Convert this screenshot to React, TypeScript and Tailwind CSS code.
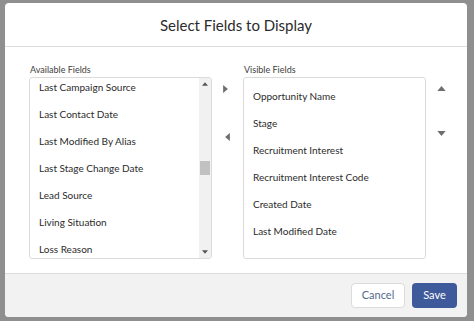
const available = [
  "Last Campaign Source",
  "Last Contact Date",
  "Last Modified By Alias",
  "Last Stage Change Date",
  "Lead Source",
  "Living Situation",
  "Loss Reason",
];

const visible = [
  "Opportunity Name",
  "Stage",
  "Recruitment Interest",
  "Recruitment Interest Code",
  "Created Date",
  "Last Modified Date",
];

const Tri = ({ dir, className }: { dir: "up" | "down" | "left" | "right"; className?: string }) => {
  const pts = {
    up: "0,6 5,0 10,6",
    down: "0,0 10,0 5,6",
    left: "6,0 6,10 0,5",
    right: "0,0 0,10 6,5",
  }[dir];
  const vb = dir === "up" || dir === "down" ? "0 0 10 6" : "0 0 6 10";
  return (
    <svg viewBox={vb} className={className} fill="currentColor">
      <polygon points={pts} />
    </svg>
  );
};

export default function App() {
  return (
    <div
      className="w-[474px] h-[321px] bg-[#8f8f8f] pl-[5px] pt-[3px] overflow-hidden"
      style={{ fontFamily: 'Lato, "Open Sans", sans-serif' }}
    >
      <div className="w-[462px] h-[314px] bg-white rounded-[4px] flex flex-col overflow-hidden">
        <div className="h-[44px] border-b border-[#dddbda] flex items-center justify-center pt-[2px] text-[15px] text-[#2b2b2b]">
          Select Fields to Display
        </div>

        <div className="flex-1 flex pl-[24px] pt-[15px]">
          <div className="flex flex-col">
            <div className="text-[9px] text-[#3e3e3c] h-[15px] leading-[15px] pl-[1px]">Available Fields</div>
            <div className="w-[183px] h-[182px] border border-[#dddbda] rounded-[3px] flex overflow-hidden">
              <div className="flex-1 overflow-hidden">
                <div className="-mt-[4px] pl-[9px]">
                  {available.map((f) => (
                    <div key={f} className="h-[27px] flex items-center text-[10px] text-[#2b2b2b]">
                      {f}
                    </div>
                  ))}
                </div>
              </div>
              <div className="w-[12px] bg-[#f1f1f1] flex flex-col items-center justify-between py-[4px]">
                <Tri dir="up" className="w-[6px] h-[4px] text-[#555]" />
                <div className="w-[10px] h-[14px] bg-[#c1c1c1] mt-[75px]" />
                <div className="flex-1" />
                <Tri dir="down" className="w-[6px] h-[4px] text-[#555]" />
              </div>
            </div>
          </div>

          <div className="w-[31px] flex flex-col items-center pt-[23px] gap-[40px]">
            <Tri dir="right" className="w-[5px] h-[8px] text-[#706e6b] ml-[-4px]" />
            <Tri dir="left" className="w-[5px] h-[8px] text-[#706e6b] ml-[-1px]" />
          </div>

          <div className="flex flex-col">
            <div className="text-[9px] text-[#3e3e3c] h-[15px] leading-[15px] pl-[1px]">Visible Fields</div>
            <div className="w-[183px] h-[182px] border border-[#dddbda] rounded-[3px] pt-[5px] pl-[9px]">
              {visible.map((f) => (
                <div key={f} className="h-[27px] flex items-center text-[10px] text-[#2b2b2b]">
                  {f}
                </div>
              ))}
            </div>
          </div>

          <div className="w-[31px] flex flex-col items-center pt-[24px] gap-[40px]">
            <Tri dir="up" className="w-[9px] h-[5px] text-[#706e6b]" />
            <Tri dir="down" className="w-[9px] h-[5px] text-[#706e6b]" />
          </div>
        </div>

        <div className="h-[44px] bg-[#f3f2f2] border-t border-[#dddbda] flex items-center justify-end gap-[7px] pr-[10px]">
          <button className="w-[54px] h-[25px] bg-white border border-[#dddbda] rounded-[4px] text-[11px] text-[#54698d]">
            Cancel
          </button>
          <button className="w-[45px] h-[25px] bg-[#3f5a9a] rounded-[4px] text-[11px] text-white">
            Save
          </button>
        </div>
      </div>
    </div>
  );
}
